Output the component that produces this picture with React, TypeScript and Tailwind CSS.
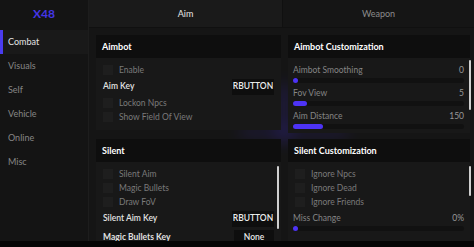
import React from "react";

const navItems = ["Combat", "Visuals", "Self", "Vehicle", "Online", "Misc"];

function Check({ label }: { label: string }) {
  return (
    <div className="flex h-[14px] items-center gap-[6px]">
      <div className="h-[10px] w-[10px] bg-[#1e1e1e]" />
      <span className="text-[8.5px] text-[#7a7a7a]">{label}</span>
    </div>
  );
}

function KeyRow({ label, value }: { label: string; value: string }) {
  return (
    <div className="flex h-[19px] items-center justify-between">
      <span className="text-[8.5px] font-semibold text-[#e2e2e2]">{label}</span>
      <span className="flex h-[16px] w-[42px] items-center justify-center bg-[#0e0e0e] text-[8.5px] font-semibold text-[#ececec]">
        {value}
      </span>
    </div>
  );
}

function Slider({ label, value, fill }: { label: string; value: string; fill: number }) {
  return (
    <div className="flex flex-col">
      <div className="flex h-[12px] items-center justify-between">
        <span className="text-[8.5px] text-[#858585]">{label}</span>
        <span className="text-[8.5px] text-[#9a9a9a]">{value}</span>
      </div>
      <div className="relative mt-[2px] h-[5px] w-full rounded-full bg-[#111111]">
        <div
          className="absolute left-0 top-0 h-[5px] rounded-full bg-[#4d33f5]"
          style={{ width: fill }}
        />
      </div>
      <div className="h-[4px]" />
    </div>
  );
}

function PanelHeader({ title }: { title: string }) {
  return (
    <div className="flex h-[23px] items-center bg-[#0e0e0e] px-[6px] text-[9px] font-bold text-white">
      {title}
    </div>
  );
}

export default function App() {
  return (
    <div
      className="relative flex h-[247px] w-[474px] overflow-hidden bg-[#161616]"
      style={{ fontFamily: 'Lato, "Open Sans", sans-serif' }}
    >
      {/* sidebar */}
      <div className="flex w-[89px] shrink-0 flex-col border-r border-[#1d1d1d] bg-[#141414]">
        <div className="flex h-[28px] items-center justify-center text-[12px] font-bold text-[#4536e6]">
          X48
        </div>
        <div className="flex flex-col pt-[2px]">
          {navItems.map((n, i) => (
            <div
              key={n}
              className={
                i === 0
                  ? "flex h-[24px] items-center border-l-[3px] border-[#4a3cf0] bg-[#191919] pl-[5px] text-[9px] text-[#e4e4e4]"
                  : "flex h-[24px] items-center pl-[8px] text-[9px] text-[#868686]"
              }
            >
              {n}
            </div>
          ))}
        </div>
      </div>

      {/* main */}
      <div className="flex flex-1 flex-col">
        <div className="flex h-[28px] shrink-0 border-b border-[#101010]">
          <div className="flex w-[194px] items-center justify-center border-r border-[#101010] bg-[#1a1a1a] text-[9px] text-[#e6e6e6]">
            Aim
          </div>
          <div className="flex flex-1 items-center justify-center bg-[#151515] text-[9px] text-[#8c8c8c]">
            Weapon
          </div>
        </div>

        <div className="relative flex flex-1 gap-[7px] bg-[#151515] pl-[7px] pr-[4px] pt-[7px]">
          {/* purple glow */}
          <div className="pointer-events-none absolute left-[150px] top-[97px] h-[14px] w-[110px] rounded-full bg-[#3a2aa8] opacity-20 blur-[8px]" />
          <div className="pointer-events-none absolute left-[186px] top-[55px] h-[60px] w-[18px] rounded-full bg-[#3a2aa8] opacity-25 blur-[8px]" />

          {/* left column */}
          <div className="relative flex w-[185px] flex-col gap-[9px]">
            <div className="flex flex-col bg-[#181818]">
              <PanelHeader title="Aimbot" />
              <div className="flex flex-col px-[7px] pt-[5px] pb-[6px]">
                <Check label="Enable" />
                <KeyRow label="Aim Key" value="RBUTTON" />
                <Check label="Lockon Npcs" />
                <Check label="Show Field Of View" />
              </div>
            </div>
            <div className="relative flex flex-1 flex-col bg-[#181818]">
              <PanelHeader title="Silent" />
              <div className="flex flex-col px-[7px] pt-[5px]">
                <Check label="Silent Aim" />
                <Check label="Magic Bullets" />
                <Check label="Draw FoV" />
                <KeyRow label="Silent Aim Key" value="RBUTTON" />
                <div className="flex h-[19px] items-center justify-between">
                  <span className="text-[8.5px] font-bold text-[#e0e0e0]">Magic Bullets Key</span>
                  <span className="flex h-[16px] w-[40px] items-center justify-center bg-[#0e0e0e] text-[8.5px] font-semibold text-[#e8e8e8]">
                    None
                  </span>
                </div>
              </div>
              <div className="absolute right-[2px] top-[27px] h-[63px] w-[2px] rounded-full bg-[#d0d0d0]" />
            </div>
          </div>

          {/* right column */}
          <div className="relative flex flex-1 flex-col gap-[6px]">
            <div className="relative flex flex-col bg-[#181818]">
              <PanelHeader title="Aimbot Customization" />
              <div className="flex flex-col pl-[5px] pr-[6px] pt-[6px]">
                <Slider label="Aimbot Smoothing" value="0" fill={5} />
                <Slider label="Fov View" value="5" fill={14} />
                <Slider label="Aim Distance" value="150" fill={30} />
              </div>
              <div className="absolute -right-[1px] top-[25px] h-[50px] w-[2px] rounded-full bg-[#d0d0d0]" />
            </div>
            <div className="relative flex flex-1 flex-col bg-[#181818]">
              <PanelHeader title="Silent Customization" />
              <div className="flex flex-col pl-[5px] pr-[6px] pt-[5px]">
                <div className="flex flex-col pl-[2px]">
                  <Check label="Ignore Npcs" />
                  <Check label="Ignore Dead" />
                  <Check label="Ignore Friends" />
                </div>
                <div className="pt-[3px]">
                  <Slider label="Miss Change" value="0%" fill={5} />
                </div>
              </div>
              <div className="absolute -right-[1px] top-[27px] h-[30px] w-[2px] rounded-full bg-[#d0d0d0]" />
            </div>
          </div>
        </div>
      </div>

      {/* bottom bar */}
      <div className="absolute bottom-0 left-0 h-[6px] w-full bg-[#050505]" />
    </div>
  );
}
